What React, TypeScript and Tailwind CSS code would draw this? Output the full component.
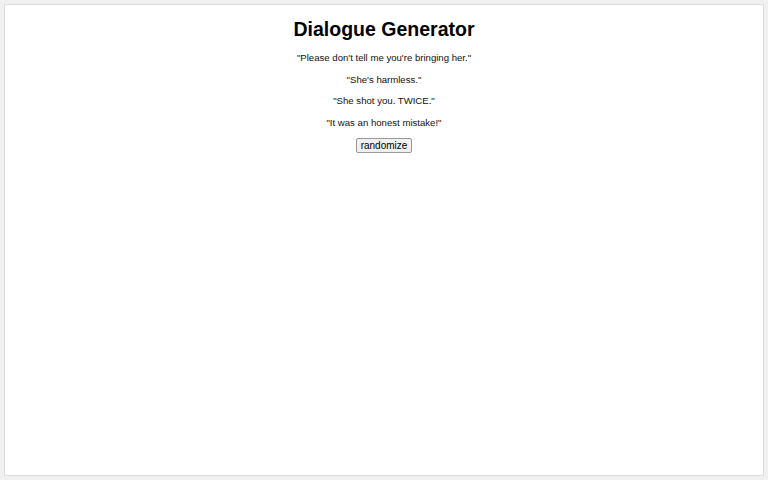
import { useState } from "react";

const lines = [
  "\"Please don't tell me you're bringing her.\"",
  "\"She's harmless.\"",
  "\"She shot you. TWICE.\"",
  "\"It was an honest mistake!\"",
];

export default function App() {
  const [dialogue, setDialogue] = useState(lines);

  const randomize = () => {
    setDialogue([...dialogue].sort(() => Math.random() - 0.5));
  };

  return (
    <div className="h-screen bg-[#f0f0f0] p-1 font-['Liberation_Sans',Arial,sans-serif] text-black">
      <div className="flex h-full flex-col items-center border border-[#dcdcdc] bg-white pt-[13px]">
        {/* Title */}
        <h1 className="text-[19.5px] leading-[23px] font-bold">Dialogue Generator</h1>

        {/* Lines */}
        <div className="mt-[11px] flex flex-col items-center gap-[10px]">
          {dialogue.map((line, i) => (
            <p key={i} className="text-[9.6px] leading-[11.5px] text-[#111]">
              {line}
            </p>
          ))}
        </div>

        {/* Action */}
        <button
          onClick={randomize}
          className="mt-[10px] rounded-[2px] border border-[#999] bg-[#f0f0f0] px-[3.5px] py-[1px] text-[10px] leading-[11px]"
        >
          randomize
        </button>
      </div>
    </div>
  );
}
